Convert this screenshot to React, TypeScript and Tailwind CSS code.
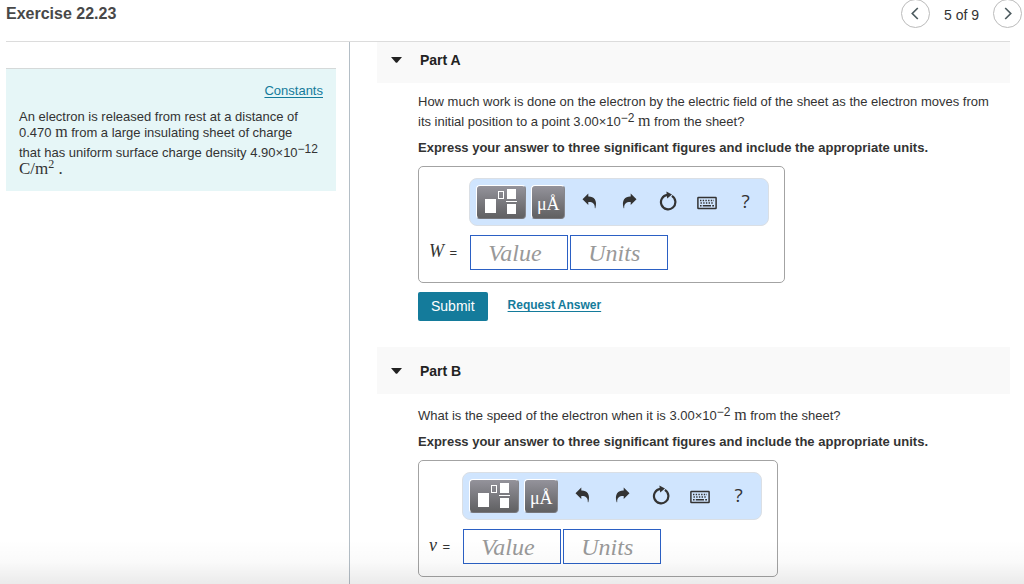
// src/App.tsx
// Homework exercise page: problem statement on the left, answer parts on the right

import type { ReactNode } from 'react';

interface PartProps {
  id: string;
  title: string;
  symbol: string;
  headerClass: string;
  children: ReactNode;
}

function Sup({ children }: { children: ReactNode }) {
  return <sup className="top-0 align-[4px] text-[12px] leading-4">{children}</sup>;
}

function Metre() {
  return <span className="font-['Liberation_Serif',serif] text-[16px] leading-[0]">m</span>;
}

function UndoIcon({ flip = false }: { flip?: boolean }) {
  return (
    <svg width="16" height="16" viewBox="0 0 16 16" fill="#333" className={flip ? '-scale-x-100' : ''} aria-hidden="true">
      <path d="M0.5 6.2 L6.3 0.6 V3.6 C11.5 3.3 15.8 7 13.4 15 C13.3 15.3 12.8 15.2 12.8 14.9 C13 10.8 10.6 8.8 6.3 9 V12 Z" />
    </svg>
  );
}

function ResetIcon() {
  return (
    <svg width="18" height="20" viewBox="0 0 18 20" fill="none" aria-hidden="true">
      <path d="M12.9 4.9 A7.2 7.2 0 1 1 8.4 3.9" stroke="#333" strokeWidth="2.2" />
      <path d="M7.4 0.4 L13 3.6 L8.2 7.4 Z" fill="#333" />
    </svg>
  );
}

function KeyboardIcon() {
  return (
    <svg width="20" height="14" viewBox="0 0 20 14" fill="none" stroke="#333" aria-hidden="true">
      <rect x="0.9" y="1.4" width="18.2" height="11.2" rx="0.5" strokeWidth="1.5" />
      <path d="M3 4.5 H17" strokeWidth="1.4" strokeDasharray="1.4 1.3" />
      <path d="M3.5 7 H17" strokeWidth="1.4" strokeDasharray="1.4 1.3" />
      <path d="M3 9.7 H4.6 M5.8 9.7 H14 M15.2 9.7 H17" strokeWidth="1.4" />
    </svg>
  );
}

function TemplateIcon() {
  return (
    <svg width="36" height="28" viewBox="0 0 36 28" fill="#fff" aria-hidden="true">
      <rect x="0" y="11" width="11" height="14" />
      <rect x="13.5" y="3.5" width="5" height="7" fill="none" stroke="#fff" />
      <rect x="22" y="1" width="9" height="10" />
      <rect x="21" y="13" width="11" height="1" />
      <rect x="22" y="16" width="9" height="10" />
    </svg>
  );
}

const darkButton =
  'flex h-[34px] items-center justify-center rounded-[4px] border border-t-white border-l-white border-r-[#85858a] border-b-[#77777c] bg-linear-to-b from-[#94939b] to-[#606062] text-white';
const iconButton = 'flex h-[34px] w-[39px] items-center justify-center text-[#333]';

function Toolbar() {
  return (
    <div
      role="toolbar"
      aria-label="Answer tools"
      className="flex h-12 w-[300px] items-center rounded-[8px] border border-[#dadfe5] bg-[#d0e5fe] pl-1.5"
    >
      <button type="button" aria-label="Templates" className={`${darkButton} mr-[5px] w-[50px] pl-1`}>
        <TemplateIcon />
      </button>
      <button
        type="button"
        aria-label="Symbols"
        className={`${darkButton} mr-[5px] w-[34px] pt-1 font-['Liberation_Serif',serif] text-[18px]`}
      >
        μÅ
      </button>
      <button type="button" aria-label="Undo" className={`${iconButton} pb-0.5`}>
        <UndoIcon />
      </button>
      <button type="button" aria-label="Redo" className={`${iconButton} pb-0.5`}>
        <UndoIcon flip />
      </button>
      <button type="button" aria-label="Reset" className={`${iconButton} pb-0.5`}>
        <ResetIcon />
      </button>
      <button type="button" aria-label="Keyboard shortcuts" className={`${iconButton} pt-0.5`}>
        <KeyboardIcon />
      </button>
      <button
        type="button"
        aria-label="Help"
        className={`${iconButton} pb-0.5 font-['Open_Sans',sans-serif] text-[19px]`}
      >
        ?
      </button>
    </div>
  );
}

const fieldClass =
  "h-[35px] w-[98px] border border-[#2b60c4] bg-transparent pl-[17px] font-['Liberation_Serif',serif] text-[24px] italic outline-none placeholder:text-[#999]";

function AnswerBox({ id, symbol }: { id: string; symbol: string }) {
  return (
    <div className="grid w-fit grid-cols-[auto_auto] items-center gap-y-[9px] rounded-[5px] border border-[#a3a3a3] pt-[11px] pr-[15px] pb-3 pl-2.5">
      <div className="col-start-2">
        <Toolbar />
      </div>
      <label htmlFor={`${id}-value`} className="pr-3 text-[13px] leading-5">
        <i className="mr-0.5 font-['Liberation_Serif',serif] text-[18px] leading-none">{symbol}</i> =
      </label>
      <div className="flex gap-0.5 pl-px">
        <input id={`${id}-value`} type="text" placeholder="Value" className={fieldClass} />
        <input id={`${id}-units`} type="text" placeholder="Units" aria-label="Units" className={fieldClass} />
      </div>
    </div>
  );
}

function Part({ id, title, symbol, headerClass, children }: PartProps) {
  return (
    <section>
      <h2 className={`flex items-center bg-[#f9f9f9] pl-3.5 ${headerClass}`}>
        <button type="button" className="flex items-center gap-[18px] text-[14px] leading-5 font-bold text-[#222]">
          <svg width="11" height="6" viewBox="0 0 11 6" fill="#222" aria-hidden="true">
            <path d="M0 0 H11 L6.3 5.4 Q5.5 6 4.7 5.4 Z" />
          </svg>
          {title}
        </button>
      </h2>
      <div className="pt-2.5 pr-2.5 pl-[41px]">
        <p className="leading-[17px]">{children}</p>
        <p className="mt-[9px] mb-2.5 leading-[17px] font-bold">
          Express your answer to three significant figures and include the appropriate units.
        </p>
        <AnswerBox id={id} symbol={symbol} />
      </div>
    </section>
  );
}

export default function App() {
  return (
    <div className="relative flex h-screen flex-col overflow-hidden bg-white pl-1.5 font-['Liberation_Sans',Arial,sans-serif] text-[13px] text-[#333]">
      <header className="flex h-[41px] shrink-0 items-start justify-between pr-0.5">
        <h1 className="pt-1 text-[16px] leading-5 font-bold text-[#484848]">Exercise 22.23</h1>
        <nav aria-label="Exercises" className="flex items-center text-[14px]">
          <button
            type="button"
            aria-label="Previous exercise"
            className="-mt-px flex size-[29px] items-center justify-center rounded-full border border-[#bbb]"
          >
            <svg width="8" height="13" viewBox="0 0 8 13" fill="none" stroke="#4d5b5f" strokeWidth="1.7" aria-hidden="true">
              <path d="M6.8 1 L1.3 6.5 L6.8 12" />
            </svg>
          </button>
          <span className="px-3.5 pt-0.5">5 of 9</span>
          <button
            type="button"
            aria-label="Next exercise"
            className="-mt-px flex size-[29px] items-center justify-center rounded-full border border-[#bbb]"
          >
            <svg width="8" height="13" viewBox="0 0 8 13" fill="none" stroke="#4d5b5f" strokeWidth="1.7" aria-hidden="true">
              <path d="M1.2 1 L6.7 6.5 L1.2 12" />
            </svg>
          </button>
        </nav>
      </header>

      <main className="mr-3.5 flex min-h-0 flex-1 border-t border-[#dcdcdc]">
        <aside className="w-[344px] shrink-0 border-r border-[#b4bec6] pt-[26px] pr-[13px]">
          <div className="border-t border-[#d5d9d9] bg-[#e6f6f7] px-[13px] pt-[13px] pb-[13px]">
            <div className="mb-[9px] text-right leading-[18px]">
              <a href="#constants" className="text-[#147b9b] underline underline-offset-2">
                Constants
              </a>
            </div>
            <p className="leading-4">
              An electron is released from rest at a distance of
              <br />
              0.470 <Metre /> from a large insulating sheet of charge
              <br />
              that has uniform surface charge density 4.90×10<Sup>−12</Sup>
              <br />
              <span className="font-['Liberation_Serif',serif] text-[17px]">
                C/m<sup className="top-0 align-[6px] text-[12px] leading-[0]">2</sup> .
              </span>
            </p>
          </div>
        </aside>

        <div className="min-w-0 flex-1 pl-[27px]">
          <Part id="part-a" title="Part A" symbol="W" headerClass="h-[41px] pb-1.5">
            How much work is done on the electron by the electric field of the sheet as the electron moves from
            its initial position to a point 3.00×10<Sup>−2</Sup> <Metre /> from the sheet?
          </Part>
          <div className="flex items-start pt-[9px] pb-[26px] pl-[41px]">
            <button type="button" className="h-[29px] rounded-[2px] bg-[#147b9b] px-[13px] text-[14px] text-white">
              Submit
            </button>
            <a
              href="#answer"
              className="ml-5 pt-1 text-[12px] leading-[18px] font-bold text-[#147b9b] underline underline-offset-2"
            >
              Request Answer
            </a>
          </div>
          <Part id="part-b" title="Part B" symbol="v" headerClass="h-[47px]">
            What is the speed of the electron when it is 3.00×10<Sup>−2</Sup> <Metre /> from the sheet?
          </Part>
        </div>
      </main>

      {/* Fade at the bottom edge */}
      <div className="pointer-events-none absolute inset-x-0 bottom-0 h-11 bg-linear-to-b from-black/0 via-black/2 to-black/8" />
    </div>
  );
}
